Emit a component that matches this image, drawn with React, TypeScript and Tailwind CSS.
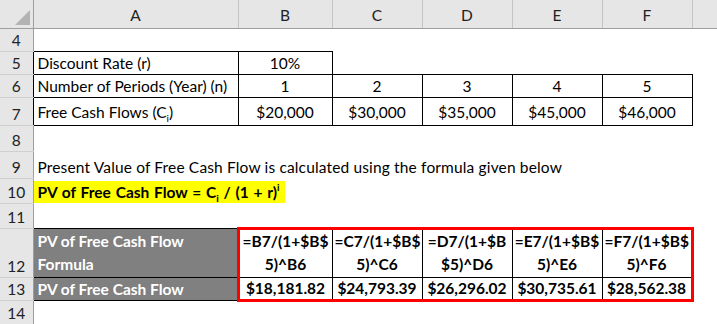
import React from 'react';

// Excel 화면 재현: PV of Free Cash Flow 예제

const rh = 'bg-[#e6e6e6] text-[#222] text-center align-bottom pb-[1px] border-b border-b-[#cfcfcf] border-r border-r-[#9e9e9e]';
const rhDark = 'bg-[#e6e6e6] text-[#222] text-center align-bottom pb-[1px] border-b border-b-[#cfcfcf] border-r border-r-black';
const cell = 'px-[4px] pb-[1px] align-bottom whitespace-nowrap';
const boxed = 'px-[4px] pb-[1px] align-bottom whitespace-nowrap border border-black';
const colHead = 'bg-[#e6e6e6] font-normal text-[#222] text-center align-middle pt-[2px] border-r border-r-[#c4c4c4] border-b border-b-[#9e9e9e]';

function Sub({ children }: { children: React.ReactNode }) {
    return <span className="relative top-[4px] text-[10px] leading-none">{children}</span>;
}

function Sup({ children }: { children: React.ReactNode }) {
    return <span className="relative -top-[7px] text-[10px] leading-none">{children}</span>;
}

export default function App() {
    const periods = [1, 2, 3, 4, 5];
    const flows = ['$20,000', '$30,000', '$35,000', '$45,000', '$46,000'];
    const results = ['$18,181.82', '$24,793.39', '$26,296.02', '$30,735.61', '$28,562.38'];

    return (
        <div className="w-[717px] h-[324px] overflow-hidden bg-white text-black text-[15.5px] leading-[20px] [font-family:Lato,sans-serif]">
            <table className="table-fixed border-collapse w-[717px]">
                <colgroup>
                    <col className="w-[33px]" />
                    <col className="w-[205px]" />
                    <col className="w-[94px]" />
                    <col className="w-[90px]" />
                    <col className="w-[90px]" />
                    <col className="w-[90px]" />
                    <col className="w-[90px]" />
                    <col className="w-[25px]" />
                </colgroup>
                <thead>
                    <tr className="h-[28px]">
                        <th className="bg-[#e6e6e6] p-0 border-r border-r-[#9e9e9e] border-b border-b-[#9e9e9e]">
                            <svg width="33" height="27" viewBox="0 0 33 27" className="block">
                                <polygon points="15,25 30,25 30,10" fill="#b3b3b3" />
                            </svg>
                        </th>
                        <th className={colHead}>A</th>
                        <th className={colHead}>B</th>
                        <th className={colHead}>C</th>
                        <th className={colHead}>D</th>
                        <th className={colHead}>E</th>
                        <th className={colHead}>F</th>
                        <th className="bg-[#e6e6e6] border-b border-b-[#9e9e9e]"></th>
                    </tr>
                </thead>
                <tbody>
                    <tr className="h-[23px]">
                        <td className={rh}>4</td>
                        <td className={cell}></td>
                        <td className={cell}></td>
                        <td className={cell}></td>
                        <td className={cell}></td>
                        <td className={cell}></td>
                        <td className={cell}></td>
                        <td className={cell}></td>
                    </tr>
                    <tr className="h-[23px]">
                        <td className={rhDark}>5</td>
                        <td className={boxed}>Discount Rate (r)</td>
                        <td className={`${boxed} text-center`}>10%</td>
                        <td className={cell}></td>
                        <td className={cell}></td>
                        <td className={cell}></td>
                        <td className={cell}></td>
                        <td className={cell}></td>
                    </tr>
                    <tr className="h-[23px]">
                        <td className={rhDark}>6</td>
                        <td className={boxed}>Number of Periods (Year) (n)</td>
                        {periods.map((p) => (
                            <td key={p} className={`${boxed} text-center`}>{p}</td>
                        ))}
                        <td className={cell}></td>
                    </tr>
                    <tr className="h-[28px]">
                        <td className={rhDark}>7</td>
                        <td className={`${boxed} pb-[3px]`}>
                            Free Cash Flows (C<Sub>i</Sub>)
                        </td>
                        {flows.map((f) => (
                            <td key={f} className={`${boxed} text-center pb-[3px]`}>{f}</td>
                        ))}
                        <td className={cell}></td>
                    </tr>
                    <tr className="h-[26px]">
                        <td className={rh}>8</td>
                        <td className={cell} colSpan={7}></td>
                    </tr>
                    <tr className="h-[27px]">
                        <td className={rh}>9</td>
                        <td className={`${cell} tracking-[0.15px]`} colSpan={7}>
                            Present Value of Free Cash Flow is calculated using the formula given below
                        </td>
                    </tr>
                    <tr className="h-[25px]">
                        <td className={rh}>10</td>
                        <td className="p-0 align-bottom whitespace-nowrap" colSpan={7}>
                            <div className="w-[251px] h-[22px] bg-[#ffff00] pl-[4px] font-bold leading-[22px] [word-spacing:1px]">
                                PV of Free Cash Flow = C<Sub>i</Sub> / (1 + r)<Sup>i</Sup>
                            </div>
                        </td>
                    </tr>
                    <tr className="h-[25px]">
                        <td className={rh}>11</td>
                        <td className={cell} colSpan={7}></td>
                    </tr>
                    <tr className="h-[49px]">
                        <td className={rh}>12</td>
                        <td className="px-[4px] pb-[1px] align-bottom bg-[#808080] text-white font-bold leading-[23px] border border-black">
                            PV of Free Cash Flow
                            <br />
                            Formula
                        </td>
                        <td className="px-[2px] pb-[1px] align-bottom text-center font-bold leading-[23px] whitespace-nowrap border border-black border-l-[3px] border-l-[#ff0000] border-t-[3px] border-t-[#ff0000]">
                            =B7/(1+$B$<br />5)^B6
                        </td>
                        <td className="px-[2px] pb-[1px] align-bottom text-center font-bold leading-[23px] whitespace-nowrap border border-black border-t-[3px] border-t-[#ff0000]">
                            =C7/(1+$B$<br />5)^C6
                        </td>
                        <td className="px-[2px] pb-[1px] align-bottom text-center font-bold leading-[23px] whitespace-nowrap border border-black border-t-[3px] border-t-[#ff0000]">
                            =D7/(1+$B<br />$5)^D6
                        </td>
                        <td className="px-[2px] pb-[1px] align-bottom text-center font-bold leading-[23px] whitespace-nowrap border border-black border-t-[3px] border-t-[#ff0000]">
                            =E7/(1+$B$<br />5)^E6
                        </td>
                        <td className="px-[2px] pb-[1px] align-bottom text-center font-bold leading-[23px] whitespace-nowrap border border-black border-t-[3px] border-t-[#ff0000] border-r-[3px] border-r-[#ff0000]">
                            =F7/(1+$B$<br />5)^F6
                        </td>
                        <td className={cell}></td>
                    </tr>
                    <tr className="h-[23px]">
                        <td className={rh}>13</td>
                        <td className="px-[4px] pb-[1px] align-bottom bg-[#808080] text-white font-bold whitespace-nowrap border border-black">
                            PV of Free Cash Flow
                        </td>
                        {results.map((v, i) => (
                            <td
                                key={v}
                                className={
                                    i === 0
                                        ? 'px-[2px] pb-[1px] align-bottom text-center font-bold whitespace-nowrap border border-black border-b-[3px] border-b-[#ff0000] border-l-[3px] border-l-[#ff0000]'
                                        : i === 4
                                            ? 'px-[2px] pb-[1px] align-bottom text-center font-bold whitespace-nowrap border border-black border-b-[3px] border-b-[#ff0000] border-r-[3px] border-r-[#ff0000]'
                                            : 'px-[2px] pb-[1px] align-bottom text-center font-bold whitespace-nowrap border border-black border-b-[3px] border-b-[#ff0000]'
                                }
                            >
                                {v}
                            </td>
                        ))}
                        <td className={cell}></td>
                    </tr>
                    <tr className="h-[24px]">
                        <td className={rh}>14</td>
                        <td className={cell} colSpan={7}></td>
                    </tr>
                </tbody>
            </table>
        </div>
    );
}
